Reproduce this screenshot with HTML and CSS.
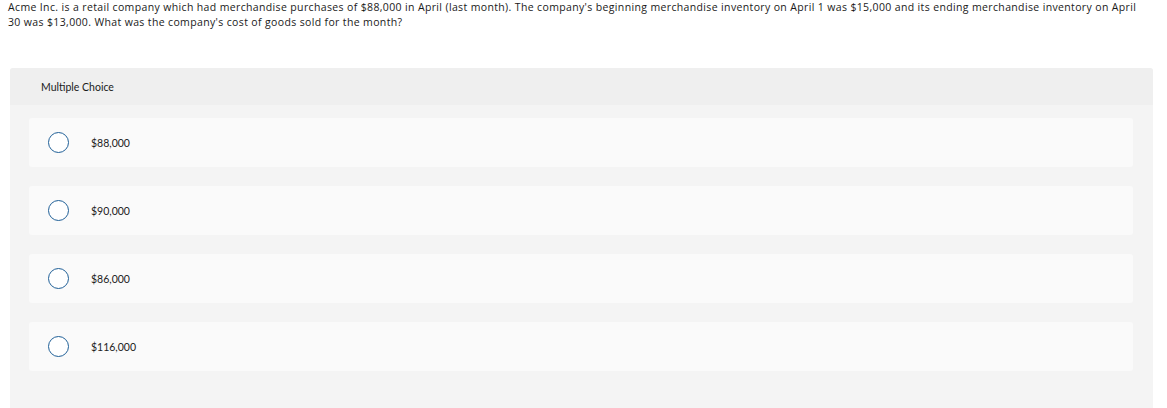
FILE: index.html
```html
<!DOCTYPE html>
<html>
<head>
<meta charset="utf-8">
<link rel="stylesheet" href="styles.css">
</head>
<body>
<p class="question">Acme Inc. is a retail company which had merchandise purchases of $88,000 in April (last month). The company's beginning merchandise inventory on April 1 was $15,000 and its ending merchandise inventory on April 30 was $13,000. What was the company's cost of goods sold for the month?</p>
<div class="mc">
  <div class="mc-head">Multiple Choice</div>
  <div class="mc-body">
    <div class="opt"><span class="radio"></span><span class="label">$88,000</span></div>
    <div class="opt"><span class="radio"></span><span class="label">$90,000</span></div>
    <div class="opt"><span class="radio"></span><span class="label">$86,000</span></div>
    <div class="opt"><span class="radio"></span><span class="label">$116,000</span></div>
  </div>
</div>
</body>
</html>
```
FILE: styles.css
```css
html, body { margin: 0; padding: 0; background: #fff; }
body {
  padding: 0 8px;
  font-family: Lato, "Liberation Sans", sans-serif;
  color: #1a1a1a;
}
.question {
  margin: 0;
  max-width: 1140px;
  font-family: "Open Sans", "Liberation Sans", sans-serif;
  font-size: 10.5px;
  letter-spacing: 0.36px;
  line-height: 15px;
  padding-top: 0;
}
.mc {
  margin: 38px 6px 0 2px;
  background: #f4f4f4;
  border-radius: 3px 3px 0 0;
  padding-bottom: 40px;
}
.mc-head {
  height: 37px;
  background: #efefef;
  border-radius: 3px 3px 0 0;
  display: flex;
  align-items: center;
  padding-left: 31px;
  font-size: 10.5px;
}
.mc-body {
  padding: 13px 20px 0 19px;
  display: flex;
  flex-direction: column;
  gap: 19px;
}
.opt {
  height: 49px;
  background: #fafafa;
  border-radius: 3px;
  display: flex;
  align-items: center;
  padding-left: 19px;
}
.radio {
  width: 19px;
  height: 19px;
  border: 1.5px solid #1f5f97;
  border-radius: 50%;
  background: #fff;
  flex: none;
}
.label {
  margin-left: 22px;
  font-size: 10.5px;
  color: #222;
}
```
